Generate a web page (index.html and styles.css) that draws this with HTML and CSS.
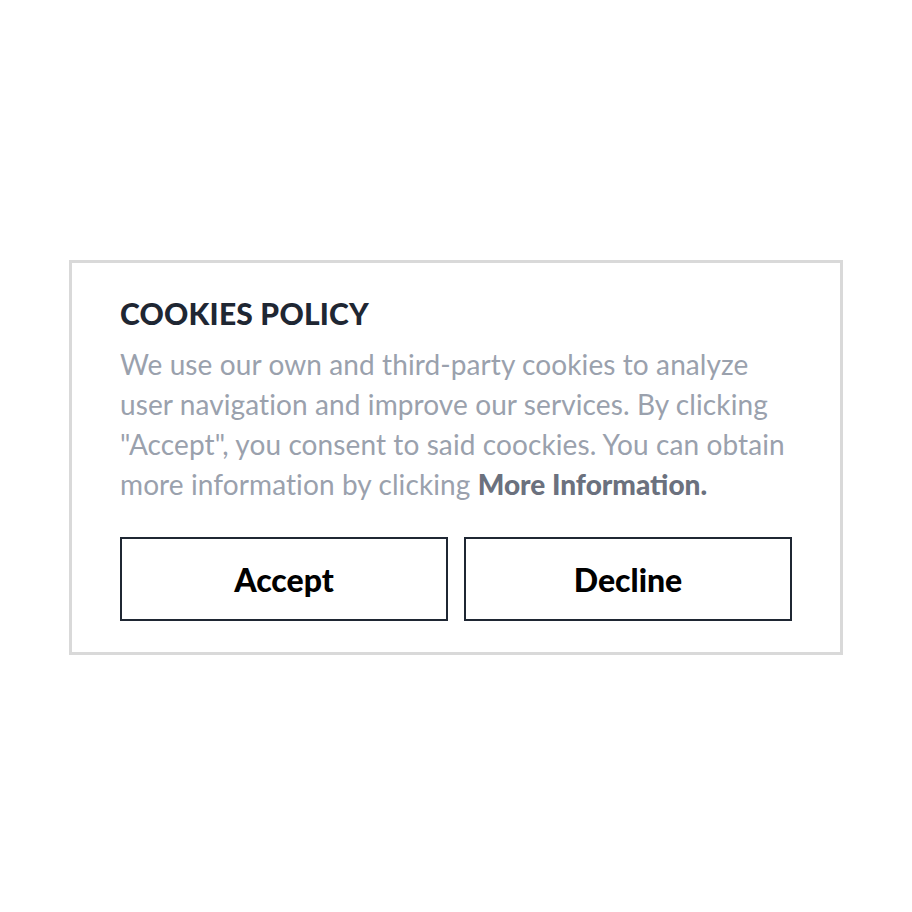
FILE: index.html
```html
<!DOCTYPE html>
<html lang="en">
<head>
<meta charset="utf-8">
<title>Cookies Policy</title>
<link rel="stylesheet" href="styles.css">
</head>
<body>
<main class="page">
  <section class="card">
    <h2 class="title">COOKIES POLICY</h2>
    <p class="text">We use our own and third-party cookies to analyze user navigation and improve our services. By clicking "Accept", you consent to said coockies. You can obtain more information by clicking <a class="more" href="#">More Information.</a></p>
    <div class="actions">
      <button class="btn" type="button">Accept</button>
      <button class="btn" type="button">Decline</button>
    </div>
  </section>
</main>
</body>
</html>
```
FILE: styles.css
```css
html, body {
  margin: 0;
  padding: 0;
  background: #ffffff;
}
.page {
  box-sizing: border-box;
  height: 912px;
  padding-top: 3px;
  display: flex;
  align-items: center;
  justify-content: center;
  font-family: Lato, "Liberation Sans", sans-serif;
}
.card {
  width: 672px;
  border: 3px solid #d9d9d9;
  padding: 30px 48px 31px;
  background: #fff;
}
.title {
  margin: 0 0 11px;
  font-size: 30px;
  line-height: 40px;
  font-weight: 900;
  color: #1f2733;
  letter-spacing: 0.2px;
}
.text {
  margin: 0 -8px 0 0;
  font-size: 28px;
  line-height: 40px;
  color: #9aa1ad;
  font-weight: 400;
  letter-spacing: 0.1px;
}
.more {
  color: #6b717e;
  font-weight: 900;
  letter-spacing: 0;
  text-decoration: none;
}
.actions {
  margin-top: 33px;
  display: grid;
  grid-template-columns: 1fr 1fr;
  gap: 16px;
}
.btn {
  height: 84px;
  border: 2px solid #1f2733;
  background: #fff;
  font-family: Lato, "Liberation Sans", sans-serif;
  font-size: 32px;
  font-weight: 900;
  color: #000;
  cursor: pointer;
}
```
